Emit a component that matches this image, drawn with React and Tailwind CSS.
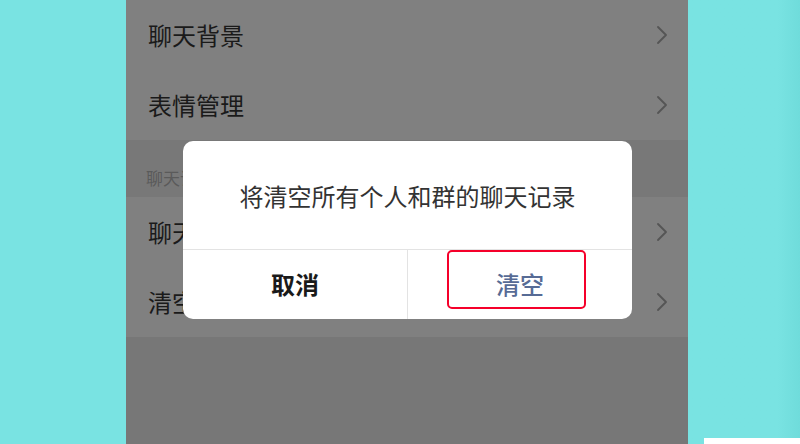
import { ChevronRight } from "lucide-react";

const font = { fontFamily: '"Noto Sans CJK SC", "Noto Sans", sans-serif' };

function Row({ label }) {
  return (
    <div className="flex h-[70px] items-center justify-between pl-[22px] pr-[10px]">
      <span className="text-[24px] leading-none text-[#1a1a1a]">{label}</span>
      <ChevronRight className="h-[32px] w-[32px] text-[#555]" strokeWidth={1.4} />
    </div>
  );
}

function ConfirmDialog() {
  return (
    <div className="absolute left-[57px] top-[141px] flex h-[178px] w-[449px] flex-col overflow-hidden rounded-[10px] bg-white">
      <div className="flex h-[108px] items-center justify-center pt-[2px] text-[24px] text-[#333]">
        将清空所有个人和群的聊天记录
      </div>
      <div className="flex flex-1 border-t border-[#e3e3e3]">
        <button className="flex flex-1 items-center justify-center pb-[2px] text-[24px] font-bold text-[#1a1a1a]">
          取消
        </button>
        <div className="w-px bg-[#e3e3e3]" />
        <button className="relative flex flex-1 items-center justify-center pb-[2px] text-[24px] font-medium text-[#576b95]">
          清空
          {/* red highlight box */}
          <span className="absolute left-[39px] top-0 h-[59px] w-[139px] rounded-[5px] border-2 border-[#f5002a]" />
        </button>
      </div>
    </div>
  );
}

export default function App() {
  return (
    <div style={font} className="flex h-[444px] w-[800px] overflow-hidden bg-[#79e3e2]">
      <div className="w-[126px]" />

      {/* =========================
          PHONE (dimmed)
      ========================= */}
      <div className="relative flex w-[562px] flex-col bg-[#777777]">
        <div className="bg-[#808080]">
          <Row label="聊天背景" />
          <Row label="表情管理" />
        </div>

        <div className="flex h-[57px] items-end bg-[#787878] pb-[11px] pl-[20px] text-[17px] leading-none text-[#5a5a5a]">
          聊天记录
        </div>

        <div className="bg-[#808080]">
          <Row label="聊天记录迁移" />
          <Row label="清空聊天记录" />
        </div>

        <ConfirmDialog />
      </div>

      <div className="relative flex-1 bg-gradient-to-r from-[#79e3e2] from-80% to-[#6fdcdb]">
        <div className="absolute bottom-0 right-0 h-[6px] w-[96px] bg-white" />
      </div>
    </div>
  );
}
